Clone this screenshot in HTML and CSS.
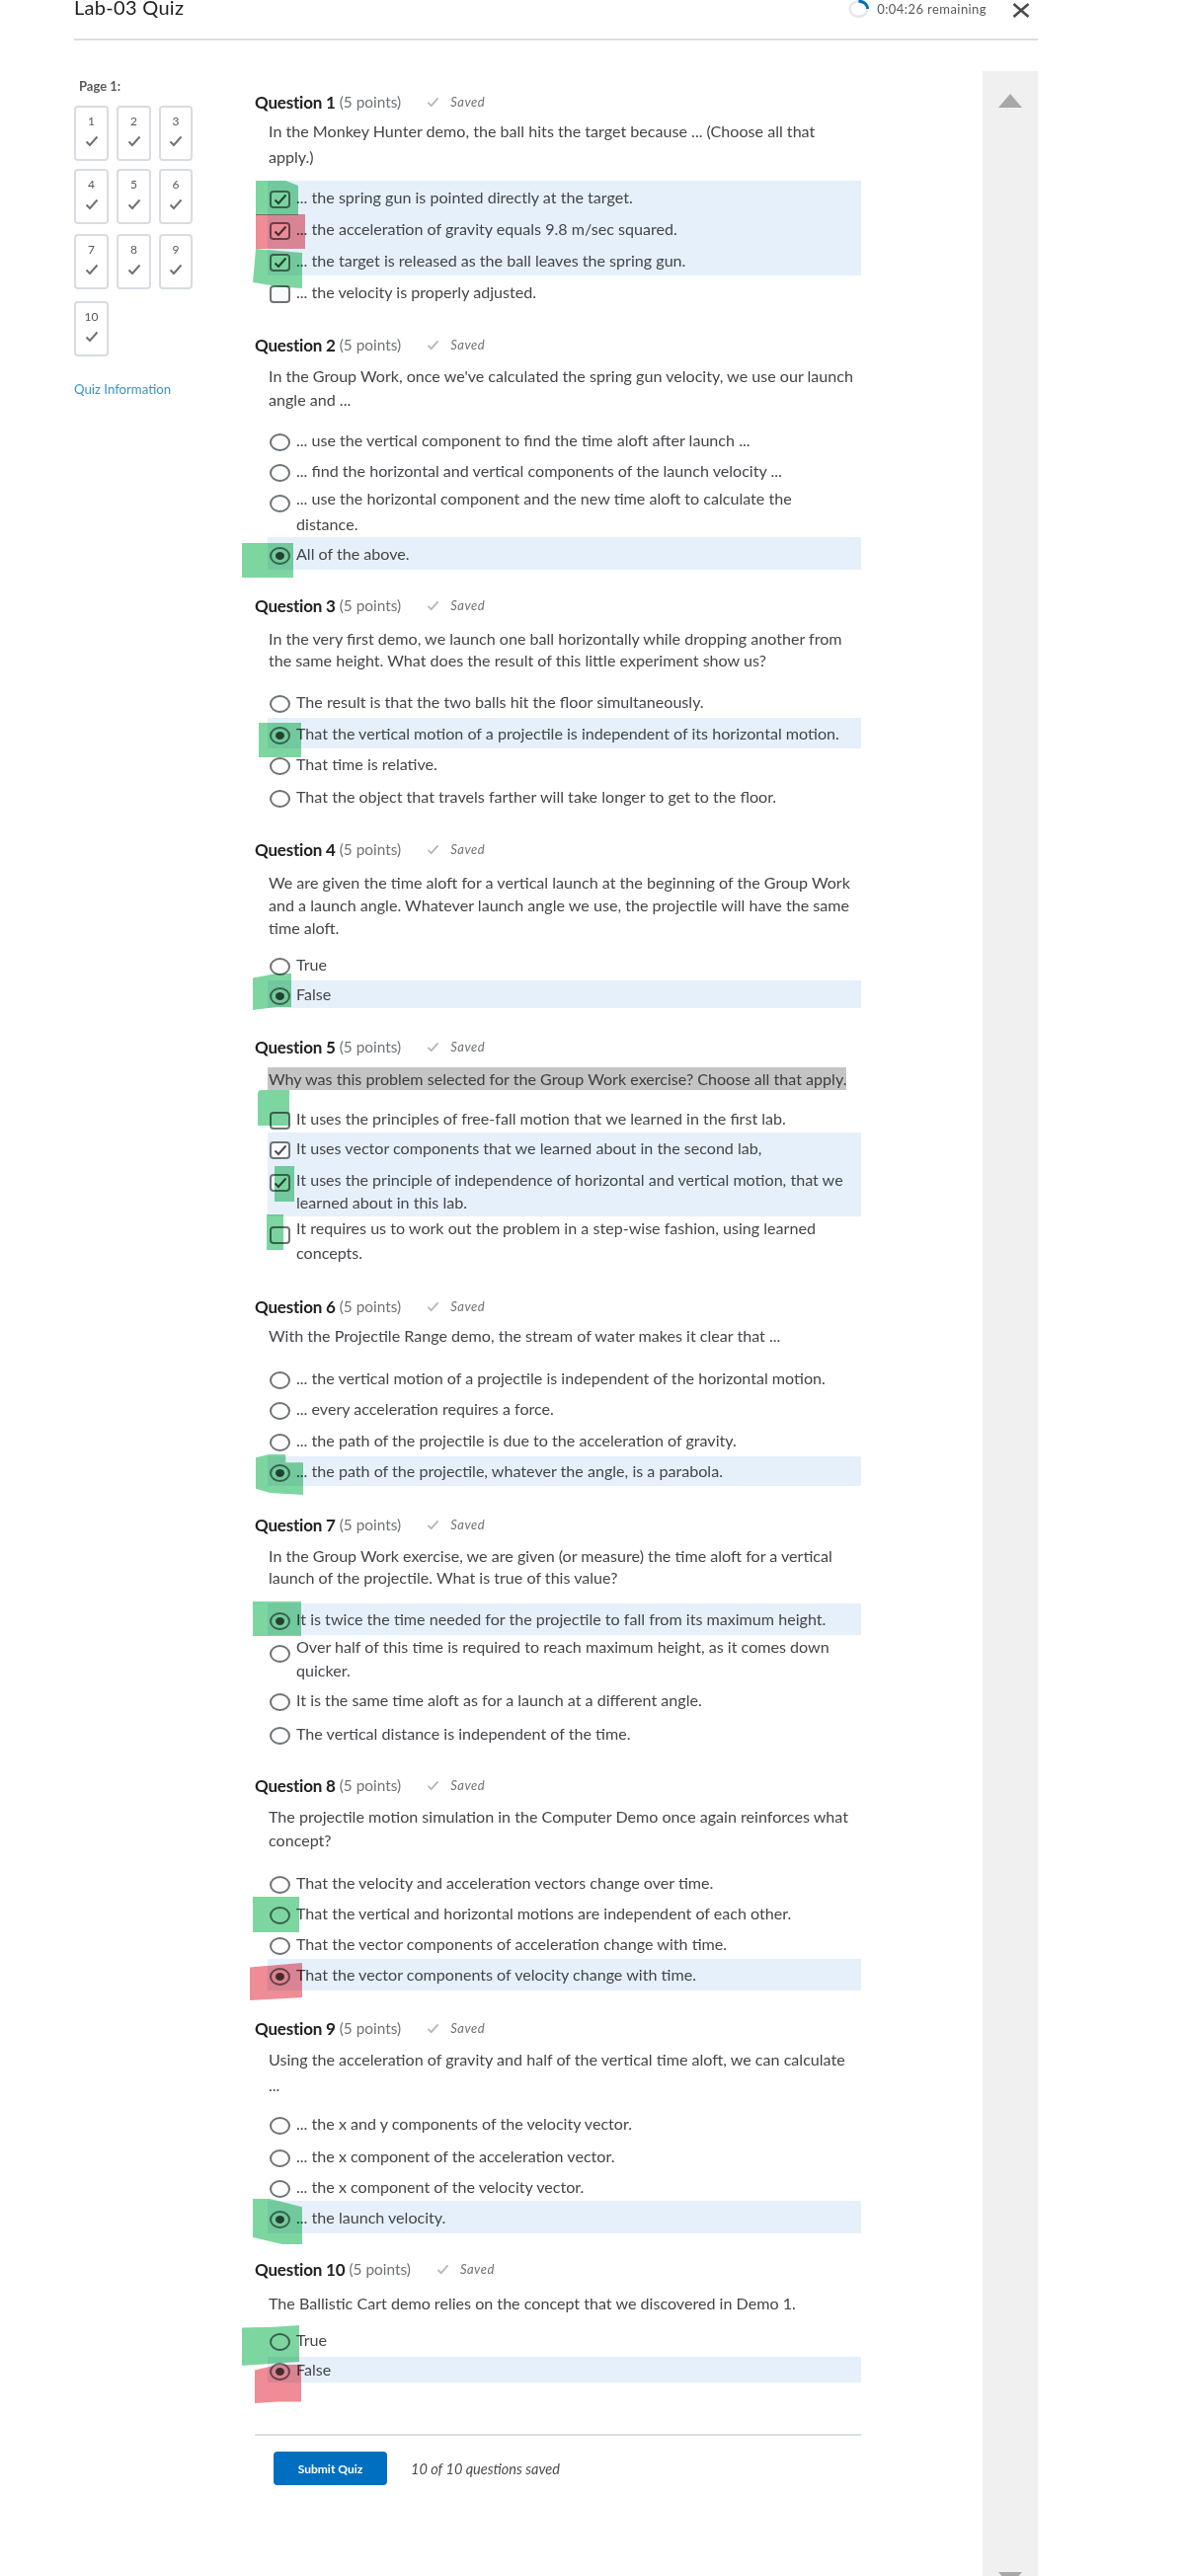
FILE: index.html
```html
<!DOCTYPE html>
<html lang="en">
<head>
<meta charset="utf-8">
<title>Lab-03 Quiz</title>
<link rel="stylesheet" href="styles.css">
</head>
<body>
<svg class="defs" width="0" height="0" aria-hidden="true">
  <symbol id="tick" viewBox="0 0 14 12"><path d="M1.5 6.5 5 10 12.5 1.5" fill="none" stroke="currentColor" stroke-width="2"/></symbol>
</svg>
<div class="page">
  <header class="top">
    <h1 class="title">Lab-03 Quiz</h1>
    <div class="timer">
      <svg class="spin" viewBox="0 0 21 18"><ellipse cx="10.5" cy="9" rx="9" ry="7.8" fill="none" stroke="#e4e9f0" stroke-width="2.4"/><path d="M10.5 1.2C15.5 1.2 19.5 4.6 19.5 9" fill="none" stroke="#006fbf" stroke-width="3"/></svg>
      <span>0:04:26 remaining</span>
    </div>
    <svg class="close" viewBox="0 0 18 15"><path d="M1.5 1 16.5 14M16.5 1 1.5 14" fill="none" stroke="#494c4e" stroke-width="2.6"/></svg>
  </header>
  <div class="body">
    <aside class="side">
      <div class="page-label">Page 1:</div>
      <div class="grid">
        <div class="cell"><span>1</span><svg class="cell-tick"><use href="#tick"/></svg></div>
        <div class="cell"><span>2</span><svg class="cell-tick"><use href="#tick"/></svg></div>
        <div class="cell"><span>3</span><svg class="cell-tick"><use href="#tick"/></svg></div>
        <div class="cell"><span>4</span><svg class="cell-tick"><use href="#tick"/></svg></div>
        <div class="cell"><span>5</span><svg class="cell-tick"><use href="#tick"/></svg></div>
        <div class="cell"><span>6</span><svg class="cell-tick"><use href="#tick"/></svg></div>
        <div class="cell"><span>7</span><svg class="cell-tick"><use href="#tick"/></svg></div>
        <div class="cell"><span>8</span><svg class="cell-tick"><use href="#tick"/></svg></div>
        <div class="cell"><span>9</span><svg class="cell-tick"><use href="#tick"/></svg></div>
        <div class="cell"><span>10</span><svg class="cell-tick"><use href="#tick"/></svg></div>
      </div>
      <a class="info">Quiz Information</a>
    </aside>
    <main class="main">

      <section class="q q1">
        <div class="head"><b>Question 1</b><span class="pts">(5 points)</span><svg class="saved-tick"><use href="#tick"/></svg><i>Saved</i></div>
        <p class="prompt">In the Monkey Hunter demo, the ball hits the target because ... (Choose all that apply.)</p>
        <div class="opt sel h33"><span class="ctl box on"><svg><use href="#tick"/></svg></span><span class="txt">... the spring gun is pointed directly at the target.</span></div>
        <div class="opt sel h32"><span class="ctl box on"><svg><use href="#tick"/></svg></span><span class="txt">... the acceleration of gravity equals 9.8 m/sec squared.</span></div>
        <div class="opt sel h31"><span class="ctl box on"><svg><use href="#tick"/></svg></span><span class="txt">... the target is released as the ball leaves the spring gun.</span></div>
        <div class="opt h34"><span class="ctl box"></span><span class="txt">... the velocity is properly adjusted.</span></div>
      </section>

      <section class="q q2">
        <div class="head"><b>Question 2</b><span class="pts">(5 points)</span><svg class="saved-tick"><use href="#tick"/></svg><i>Saved</i></div>
        <p class="prompt">In the Group Work, once we've calculated the spring gun velocity, we use our launch angle and ...</p>
        <div class="opt h34"><span class="ctl radio"></span><span class="txt">... use the vertical component to find the time aloft after launch ...</span></div>
        <div class="opt h28"><span class="ctl radio"></span><span class="txt">... find the horizontal and vertical components of the launch velocity ...</span></div>
        <div class="opt multi h53 l26"><span class="ctl radio"></span><span class="txt">... use the horizontal component and the new time aloft to calculate the<br>distance.</span></div>
        <div class="opt sel h33"><span class="ctl radio on"></span><span class="txt">All of the above.</span></div>
      </section>

      <section class="q q3">
        <div class="head"><b>Question 3</b><span class="pts">(5 points)</span><svg class="saved-tick"><use href="#tick"/></svg><i>Saved</i></div>
        <p class="prompt">In the very first demo, we launch one ball horizontally while dropping another from the same height. What does the result of this little experiment show us?</p>
        <div class="opt h32"><span class="ctl radio"></span><span class="txt">The result is that the two balls hit the floor simultaneously.</span></div>
        <div class="opt sel h31"><span class="ctl radio on"></span><span class="txt">That the vertical motion of a projectile is independent of its horizontal motion.</span></div>
        <div class="opt h32"><span class="ctl radio"></span><span class="txt">That time is relative.</span></div>
        <div class="opt h34"><span class="ctl radio"></span><span class="txt">That the object that travels farther will take longer to get to the floor.</span></div>
      </section>

      <section class="q q4">
        <div class="head"><b>Question 4</b><span class="pts">(5 points)</span><svg class="saved-tick"><use href="#tick"/></svg><i>Saved</i></div>
        <p class="prompt">We are given the time aloft for a vertical launch at the beginning of the Group Work and a launch angle. Whatever launch angle we use, the projectile will have the same time aloft.</p>
        <div class="opt h33"><span class="ctl radio"></span><span class="txt">True</span></div>
        <div class="opt sel h28"><span class="ctl radio on"></span><span class="txt">False</span></div>
      </section>

      <section class="q q5">
        <div class="head"><b>Question 5</b><span class="pts">(5 points)</span><svg class="saved-tick"><use href="#tick"/></svg><i>Saved</i></div>
        <p class="prompt"><span class="hilite">Why was this problem selected for the Group Work exercise? Choose all that apply.</span></p>
        <div class="opt h29"><span class="ctl box"></span><span class="txt">It uses the principles of free-fall motion that we learned in the first lab.</span></div>
        <div class="opt sel h32"><span class="ctl box on"><svg><use href="#tick"/></svg></span><span class="txt">It uses vector components that we learned about in the second lab,</span></div>
        <div class="opt sel multi h53 l23"><span class="ctl box on"><svg><use href="#tick"/></svg></span><span class="txt">It uses the principle of independence of horizontal and vertical motion, that we learned about in this lab.</span></div>
        <div class="opt multi h48 l25"><span class="ctl box"></span><span class="txt">It requires us to work out the problem in a step-wise fashion, using learned concepts.</span></div>
      </section>

      <section class="q q6">
        <div class="head"><b>Question 6</b><span class="pts">(5 points)</span><svg class="saved-tick"><use href="#tick"/></svg><i>Saved</i></div>
        <p class="prompt">With the Projectile Range demo, the stream of water makes it clear that ...</p>
        <div class="opt h32"><span class="ctl radio"></span><span class="txt">... the vertical motion of a projectile is independent of the horizontal motion.</span></div>
        <div class="opt h30"><span class="ctl radio"></span><span class="txt">... every acceleration requires a force.</span></div>
        <div class="opt h33"><span class="ctl radio"></span><span class="txt">... the path of the projectile is due to the acceleration of gravity.</span></div>
        <div class="opt sel h30"><span class="ctl radio on"></span><span class="txt">... the path of the projectile, whatever the angle, is a parabola.</span></div>
      </section>

      <section class="q q7">
        <div class="head"><b>Question 7</b><span class="pts">(5 points)</span><svg class="saved-tick"><use href="#tick"/></svg><i>Saved</i></div>
        <p class="prompt">In the Group Work exercise, we are given (or measure) the time aloft for a vertical launch of the projectile. What is true of this value?</p>
        <div class="opt sel h32"><span class="ctl radio on"></span><span class="txt">It is twice the time needed for the projectile to fall from its maximum height.</span></div>
        <div class="opt multi h48 l24"><span class="ctl radio"></span><span class="txt">Over half of this time is required to reach maximum height, as it comes down quicker.</span></div>
        <div class="opt h36"><span class="ctl radio"></span><span class="txt">It is the same time aloft as for a launch at a different angle.</span></div>
        <div class="opt h32"><span class="ctl radio"></span><span class="txt">The vertical distance is independent of the time.</span></div>
      </section>

      <section class="q q8">
        <div class="head"><b>Question 8</b><span class="pts">(5 points)</span><svg class="saved-tick"><use href="#tick"/></svg><i>Saved</i></div>
        <p class="prompt">The projectile motion simulation in the Computer Demo once again reinforces what concept?</p>
        <div class="opt h32"><span class="ctl radio"></span><span class="txt">That the velocity and acceleration vectors change over time.</span></div>
        <div class="opt h30"><span class="ctl radio"></span><span class="txt">That the vertical and horizontal motions are independent of each other.</span></div>
        <div class="opt h31"><span class="ctl radio"></span><span class="txt">That the vector components of acceleration change with time.</span></div>
        <div class="opt sel h32"><span class="ctl radio on"></span><span class="txt">That the vector components of velocity change with time.</span></div>
      </section>

      <section class="q q9">
        <div class="head"><b>Question 9</b><span class="pts">(5 points)</span><svg class="saved-tick"><use href="#tick"/></svg><i>Saved</i></div>
        <p class="prompt">Using the acceleration of gravity and half of the vertical time aloft, we can calculate<br>...</p>
        <div class="opt h33"><span class="ctl radio"></span><span class="txt">... the x and y components of the velocity vector.</span></div>
        <div class="opt h33"><span class="ctl radio"></span><span class="txt">... the x component of the acceleration vector.</span></div>
        <div class="opt h29"><span class="ctl radio"></span><span class="txt">... the x component of the velocity vector.</span></div>
        <div class="opt sel h33"><span class="ctl radio on"></span><span class="txt">... the launch velocity.</span></div>
      </section>

      <section class="q q10">
        <div class="head"><b>Question 10</b><span class="pts">(5 points)</span><svg class="saved-tick"><use href="#tick"/></svg><i>Saved</i></div>
        <p class="prompt">The Ballistic Cart demo relies on the concept that we discovered in Demo 1.</p>
        <div class="opt h34"><span class="ctl radio"></span><span class="txt">True</span></div>
        <div class="opt sel h26"><span class="ctl radio on"></span><span class="txt">False</span></div>
      </section>

      <footer class="foot">
        <button class="submit">Submit Quiz</button>
        <span class="count">10 of 10 questions saved</span>
      </footer>
    </main>
    <div class="track"><span class="arrow up"></span><span class="arrow down"></span></div>
  </div>

  <div class="mark g m1"></div>
  <div class="mark r m2"></div>
  <div class="mark g m3"></div>
  <div class="mark g m4"></div>
  <div class="mark g m5"></div>
  <div class="mark g m6"></div>
  <div class="mark g m7"></div>
  <div class="mark g m8"></div>
  <div class="mark g m9"></div>
  <div class="mark g m10"></div>
  <div class="mark g m11"></div>
  <div class="mark g m12"></div>
  <div class="mark r m13"></div>
  <div class="mark g m14"></div>
  <div class="mark g m15"></div>
  <div class="mark r m16"></div>
</div>
</body>
</html>
```
FILE: styles.css
```css
* { box-sizing: border-box; }
html, body { margin: 0; height: 2609px; overflow: hidden; background: #fff; }
body { font-family: Lato, "Open Sans", sans-serif; color: #494c4e; }
.defs { position: absolute; }
.page { position: relative; height: 2609px; padding: 0 149px 0 75px; filter: blur(.55px); overflow: hidden; }

.top { display: flex; align-items: flex-start; height: 41px; border-bottom: 2px solid #d8dee6; }
.title { margin: -5px auto 0 0; font-size: 20px; line-height: 24px; font-weight: 400; color: #202122; letter-spacing: .3px; }
.timer { display: flex; align-items: center; gap: 8px; font-size: 13px; line-height: 18px; color: #565a5c; letter-spacing: .43px; }
.spin { width: 21px; height: 18px; }
.close { width: 18px; height: 15px; margin: 3px 8px 0 26px; }

.body { display: flex; height: 2568px; }
.side { width: 183px; flex: none; padding-top: 37px; }
.page-label { padding-left: 5px; font-size: 13px; line-height: 18px; font-weight: 700; color: #565a5c; margin-bottom: 11px; }
.grid { display: grid; grid-template-columns: 35px 35px 34px; grid-template-rows: 64px 66px 68px 56px; column-gap: 8px; }
.cell { height: 56px; border: 2px solid #d8dce2; border-radius: 4px; display: flex; flex-direction: column; align-items: center; padding-top: 6px; font-size: 12px; line-height: 16px; color: #565a5c; }
.cell-tick { width: 14px; height: 12px; margin-top: 6px; color: #6e7376; }
.info { display: block; margin-top: 24px; font-size: 13.2px; line-height: 18px; color: #3f93c7; }

.main { width: 614px; flex: none; padding-top: 52px; }
.q { margin-top: 26px; }
.q1 { margin-top: 0; }
.q5, .q7 { margin-top: 29px; }
.q6 { margin-top: 33px; }
.q9 { margin-top: 28px; }

.head { display: flex; align-items: center; height: 20px; }
.head b { font-size: 17px; font-weight: 700; color: #202122; letter-spacing: -.2px; margin-right: 4px; }
.pts { font-size: 15.4px; color: #6e7376; margin-right: 26px; }
.saved-tick { width: 13px; height: 11px; color: #b5b8bb; margin-right: 11px; }
.head i { font-size: 13px; color: #6e7376; letter-spacing: .5px; }

.prompt { margin: 10px 0 12px; padding: 0 0 0 14px; font-size: 16.1px; line-height: 24px; color: #43464a; }
.q1 .prompt { margin: 7px 0 11px; line-height: 26px; }
.q3 .prompt { margin: 13px 0 15px; line-height: 22px; }
.q4 .prompt { margin: 12px 0 9px; line-height: 23px; }
.q5 .prompt { margin: 11px 0 14px; line-height: 23px; }
.q6 .prompt { margin: 8px 0 15px; }
.q7 .prompt { margin: 11px 0 15px; line-height: 22px; }
.q8 .prompt { margin: 10px 0 15px; }
.q9 .prompt { margin: 9px 0 9px; line-height: 26px; }
.q10 .prompt { margin: 13px 0 8px; }
.hilite { display: block; width: fit-content; background: #c4c4c4; color: #3c3e40; margin-left: -1px; padding-left: 1px; }

.opt { display: flex; align-items: center; margin-left: 13px; padding-left: 2px; font-size: 16.1px; line-height: 24px; gap: 6px; color: #43464a; }
.sel { background: #e6f0fb; }
.multi { align-items: flex-start; }
.multi .txt { align-self: center; }
.multi .ctl { margin-top: 10px; }
.txt { flex: 1; }
.ctl { flex: none; width: 21px; height: 18px; margin-top: 4px; border: 2.5px solid #6e7376; background: #fff; display: flex; align-items: center; justify-content: center; }
.box { border-radius: 4px; background: #f9fbff; }
.box svg { width: 14px; height: 12px; color: #494c4e; }
.radio { border-radius: 50%; }
.radio.on::after { content: ""; width: 9px; height: 8px; border-radius: 50%; background: #494c4e; }
.radio.on { background: transparent; }
.h26 { height: 26px; } .h28 { height: 28px; } .h29 { height: 29px; } .h30 { height: 30px; }
.h31 { height: 31px; } .h32 { height: 32px; } .h33 { height: 33px; } .h34 { height: 34px; }
.h36 { height: 36px; } .h48 { height: 48px; } .h53 { height: 53px; }
.l23 { line-height: 23px; } .l24 { line-height: 24px; } .l25 { line-height: 25px; } .l26 { line-height: 26px; }

.foot { display: flex; align-items: center; margin-top: 52px; border-top: 2px solid #d8dee6; padding: 16px 0 0 19px; }
.submit { width: 115px; height: 34px; border: 0; border-radius: 4px; background: #006fbf; color: #fff; font: 700 12px Lato, sans-serif; padding: 0; }
.count { margin-left: 24px; font-size: 14.5px; font-style: italic; color: #494c4e; }

.track { position: relative; width: 56px; flex: none; margin: 31px 0 0 123px; background: #f0f0f0; height: 2537px; display: flex; flex-direction: column; justify-content: space-between; align-items: center; padding-top: 23px; }
.arrow { width: 0; height: 0; border-left: 12px solid transparent; border-right: 12px solid transparent; }
.up { border-bottom: 14px solid #a8a8a8; }
.down { border-top: 14px solid #a8a8a8; margin-bottom: -10px; }

.mark { position: absolute; mix-blend-mode: multiply; }
.g { background: #7dd6a0; }
.r { background: #f08c96; }
.m1 { left: 259px; top: 183px; width: 43px; height: 35px; clip-path: polygon(0 0, 70% 0, 100% 14%, 100% 100%, 0 100%); }
.m2 { left: 259px; top: 217px; width: 50px; height: 35px; }
.m3 { left: 256px; top: 252px; width: 50px; height: 40px; clip-path: polygon(6% 0, 100% 10%, 100% 100%, 55% 96%, 0 85%); }
.m4 { left: 245px; top: 550px; width: 52px; height: 35px; }
.m5 { left: 262px; top: 732px; width: 43px; height: 35px; }
.m6 { left: 256px; top: 986px; width: 39px; height: 37px; clip-path: polygon(0 12%, 60% 0, 100% 0, 100% 92%, 60% 92%, 0 100%); }
.m7 { left: 261px; top: 1104px; width: 32px; height: 36px; border-radius: 4px 0 0 0; }
.m8 { left: 278px; top: 1181px; width: 20px; height: 36px; }
.m9 { left: 270px; top: 1230px; width: 17px; height: 36px; }
.m10 { left: 259px; top: 1473px; width: 48px; height: 41px; clip-path: polygon(28% 0, 63% 0, 63% 20%, 100% 20%, 100% 100%, 30% 95%, 0 85%, 0 8%); }
.m11 { left: 256px; top: 1622px; width: 49px; height: 35px; }
.m12 { left: 256px; top: 1921px; width: 47px; height: 36px; }
.m13 { left: 253px; top: 1988px; width: 53px; height: 38px; clip-path: polygon(0 12%, 100% 0, 100% 92%, 0 100%); }
.m14 { left: 256px; top: 2227px; width: 50px; height: 46px; clip-path: polygon(0 0, 35% 0, 100% 18%, 100% 100%, 60% 100%, 0 85%); }
.m15 { left: 245px; top: 2355px; width: 58px; height: 41px; clip-path: polygon(0 6%, 50% 5%, 100% 0, 100% 90%, 0 100%); }
.m16 { left: 258px; top: 2395px; width: 47px; height: 39px; clip-path: polygon(0 14%, 50% 0, 100% 0, 100% 96%, 50% 96%, 0 100%); }
```
